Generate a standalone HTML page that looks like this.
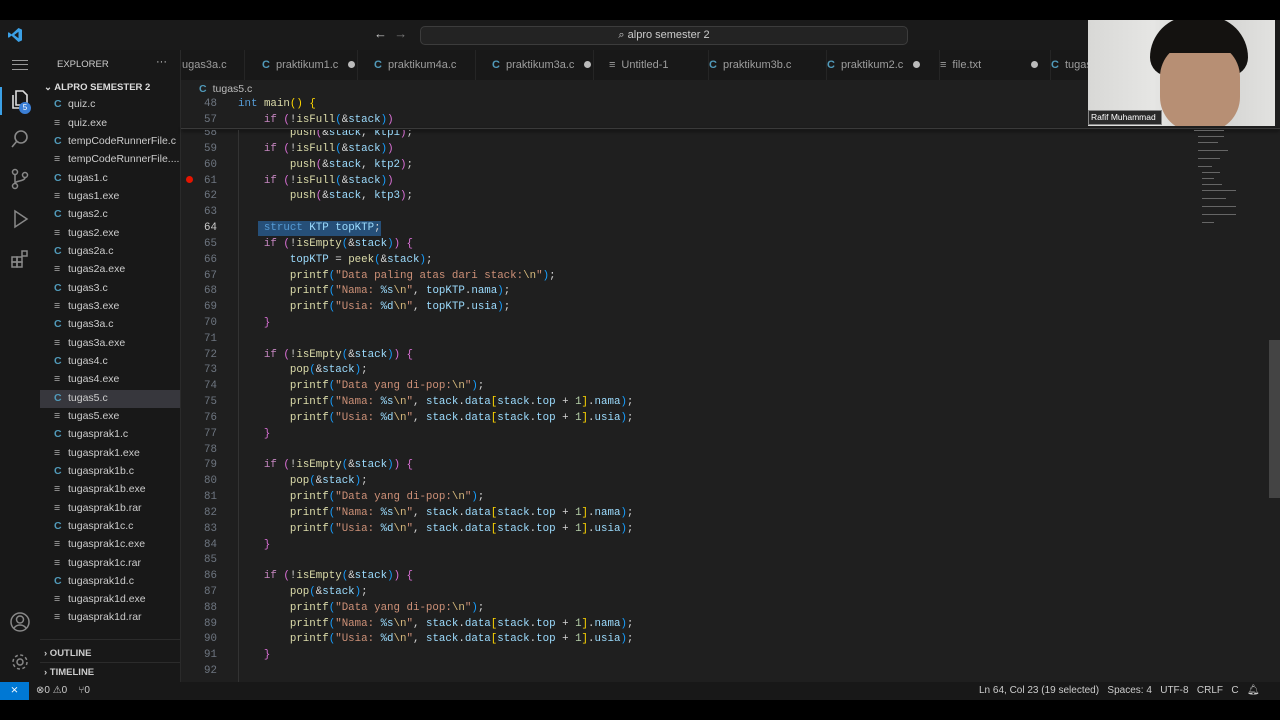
<!DOCTYPE html>
<html><head><meta charset="utf-8"><style>
*{margin:0;padding:0;box-sizing:border-box}
body{width:1280px;height:720px;background:#000;position:relative;overflow:hidden;font-family:"Liberation Sans",sans-serif;color:#ccc}
.abs{position:absolute}
#title{left:0;top:20px;width:1280px;height:30px;background:#1a1a1a}
#act{left:0;top:50px;width:40px;height:632px;background:#181818}
#side{left:40px;top:50px;width:141px;height:632px;background:#181818;border-right:1px solid #2a2a2a}
#ed{left:181px;top:80px;width:1099px;height:602px;background:#1f1f1f}
#tabs{left:181px;top:50px;width:1099px;height:30px;background:#181818}
.tab{position:absolute;top:0;height:30px;font-size:11px;color:#9d9d9d;line-height:30px;border-right:1px solid #252525;white-space:nowrap}
.ci{color:#519aba;font-weight:bold;margin-right:6px}
.dot{display:inline-block;width:7px;height:7px;border-radius:50%;background:#bbb;margin-left:10px}
.fi{position:absolute;left:54px;font-size:10.5px;color:#ccc;white-space:nowrap}
.fi b{display:inline-block;width:14px;color:#519aba;font-weight:bold}
.fi i{display:inline-block;width:14px;font-style:normal;color:#aaa}
.ln{position:absolute;left:181px;width:36px;text-align:right;font-family:"Liberation Mono",monospace;font-size:10.8px;color:#6e7681}
.cl{position:absolute;left:238px;font-family:"Liberation Mono",monospace;font-size:10.8px;color:#d4d4d4;white-space:pre}
.k{color:#569cd6}.c{color:#c586c0}.f{color:#dcdcaa}.v{color:#9cdcfe}.s{color:#ce9178}.n{color:#b5cea8}.b1{color:#ffd700}.b2{color:#da70d6}.b3{color:#179fff}.e{color:#d7ba7d}
#status{left:0;top:682px;width:1280px;height:18px;background:#181818;font-size:10px;color:#ccc;line-height:18px}
.mm{position:absolute;height:1px;background:#666}
</style></head><body>
<div id="title" class="abs">
 <svg class="abs" style="left:7px;top:7px" width="16" height="16" viewBox="0 0 16 16"><path d="M11.5 1 L15 2.6 V13.4 L11.5 15 L4.5 8.6 L1.8 10.7 L1 10.2 V5.8 L1.8 5.3 L4.5 7.4 L11.5 1 Z M11.5 4.8 L7.2 8 L11.5 11.2 Z" fill="#3ba0e6"/></svg>
 <div class="abs" style="left:374px;top:6px;font-size:13px;color:#ccc">←&nbsp;&nbsp;<span style="color:#777">→</span></div>
 <div class="abs" style="left:420px;top:6px;width:488px;height:19px;border:1px solid #3c3c3c;border-radius:5px;background:#232323;font-size:11px;text-align:center;line-height:17px;color:#ccc">⌕ alpro semester 2</div>
</div>
<div id="act" class="abs">
 <div class="abs" style="left:12px;top:10px;width:16px;height:10px;border-top:1.5px solid #999;border-bottom:1.5px solid #999"></div><div class="abs" style="left:12px;top:14px;width:16px;border-top:1.5px solid #999"></div>
 <div class="abs" style="left:0;top:37px;width:2px;height:28px;background:#3ba0e6"></div>
 <svg class="abs" style="left:9px;top:38px" width="24" height="24" viewBox="0 0 24 24" fill="none" stroke="#ddd" stroke-width="1.6"><path d="M7 3h7l4 4v10H7z M4 7v13h10"/></svg>
 <div class="abs" style="left:19px;top:52px;width:12px;height:12px;border-radius:50%;background:#3b7fd6;font-size:8px;color:#fff;text-align:center;line-height:12px">5</div>
 <svg class="abs" style="left:9px;top:78px" width="22" height="22" viewBox="0 0 22 22" fill="none" stroke="#888" stroke-width="1.6"><circle cx="12" cy="9" r="6"/><path d="M8 13 L3 19"/></svg>
 <svg class="abs" style="left:9px;top:118px" width="22" height="22" viewBox="0 0 22 22" fill="none" stroke="#888" stroke-width="1.5"><circle cx="6" cy="4" r="2.5"/><circle cx="6" cy="18" r="2.5"/><circle cx="16" cy="7" r="2.5"/><path d="M6 6.5v9 M16 9.5c0 4-10 3-10 6"/></svg>
 <svg class="abs" style="left:9px;top:158px" width="22" height="22" viewBox="0 0 22 22" fill="none" stroke="#888" stroke-width="1.5"><path d="M6 3 L18 11 L6 19 Z"/></svg>
 <svg class="abs" style="left:9px;top:198px" width="22" height="22" viewBox="0 0 22 22" fill="none" stroke="#888" stroke-width="1.5"><rect x="3" y="9" width="5" height="5"/><rect x="8" y="9" width="5" height="5"/><rect x="3" y="14" width="5" height="5"/><rect x="8" y="14" width="5" height="5"/><rect x="13" y="3" width="5" height="5"/></svg>
 <svg class="abs" style="left:9px;top:561px" width="22" height="22" viewBox="0 0 22 22" fill="none" stroke="#888" stroke-width="1.5"><circle cx="11" cy="11" r="9"/><circle cx="11" cy="8.5" r="3.5"/><path d="M5 17c3-4 9-4 12 0"/></svg>
 <svg class="abs" style="left:9px;top:601px" width="22" height="22" viewBox="0 0 22 22" fill="none" stroke="#888" stroke-width="1.5"><circle cx="11" cy="11" r="3"/><circle cx="11" cy="11" r="7" stroke-dasharray="3 2.5"/></svg>
</div>
<div id="side" class="abs">
 <div class="abs" style="left:17px;top:9px;font-size:9.5px;color:#ccc">EXPLORER</div>
 <div class="abs" style="left:116px;top:6px;font-size:11px;color:#ccc">···</div>
 <div class="abs" style="left:4px;top:32px;font-size:9.5px;font-weight:bold;color:#ddd">⌄ ALPRO SEMESTER 2</div>
 <div class="abs" style="left:0;top:340px;width:140px;height:18px;background:#37373d"></div>
 <div class="abs" style="left:0;top:589px;width:140px;border-top:1px solid #2b2b2b"></div>
 <div class="abs" style="left:4px;top:598px;font-size:9.5px;font-weight:bold;color:#ccc">› OUTLINE</div>
 <div class="abs" style="left:0;top:612px;width:140px;border-top:1px solid #2b2b2b"></div>
 <div class="abs" style="left:4px;top:617px;font-size:9.5px;font-weight:bold;color:#ccc">› TIMELINE</div>
</div>
<div class="abs" style="left:0;top:0;width:0;height:0">
<div class="fi" style="top:98px"><b>C</b>quiz.c</div>
<div class="fi" style="top:117px"><i>≡</i>quiz.exe</div>
<div class="fi" style="top:135px"><b>C</b>tempCodeRunnerFile.c</div>
<div class="fi" style="top:153px"><i>≡</i>tempCodeRunnerFile....</div>
<div class="fi" style="top:172px"><b>C</b>tugas1.c</div>
<div class="fi" style="top:190px"><i>≡</i>tugas1.exe</div>
<div class="fi" style="top:208px"><b>C</b>tugas2.c</div>
<div class="fi" style="top:227px"><i>≡</i>tugas2.exe</div>
<div class="fi" style="top:245px"><b>C</b>tugas2a.c</div>
<div class="fi" style="top:263px"><i>≡</i>tugas2a.exe</div>
<div class="fi" style="top:282px"><b>C</b>tugas3.c</div>
<div class="fi" style="top:300px"><i>≡</i>tugas3.exe</div>
<div class="fi" style="top:318px"><b>C</b>tugas3a.c</div>
<div class="fi" style="top:337px"><i>≡</i>tugas3a.exe</div>
<div class="fi" style="top:355px"><b>C</b>tugas4.c</div>
<div class="fi" style="top:373px"><i>≡</i>tugas4.exe</div>
<div class="fi" style="top:392px"><b>C</b>tugas5.c</div>
<div class="fi" style="top:410px"><i>≡</i>tugas5.exe</div>
<div class="fi" style="top:428px"><b>C</b>tugasprak1.c</div>
<div class="fi" style="top:447px"><i>≡</i>tugasprak1.exe</div>
<div class="fi" style="top:465px"><b>C</b>tugasprak1b.c</div>
<div class="fi" style="top:483px"><i>≡</i>tugasprak1b.exe</div>
<div class="fi" style="top:502px"><i>≡</i>tugasprak1b.rar</div>
<div class="fi" style="top:520px"><b>C</b>tugasprak1c.c</div>
<div class="fi" style="top:538px"><i>≡</i>tugasprak1c.exe</div>
<div class="fi" style="top:557px"><i>≡</i>tugasprak1c.rar</div>
<div class="fi" style="top:575px"><b>C</b>tugasprak1d.c</div>
<div class="fi" style="top:593px"><i>≡</i>tugasprak1d.exe</div>
<div class="fi" style="top:611px"><i>≡</i>tugasprak1d.rar</div>
</div>
<div id="tabs" class="abs">
 <div class="tab" style="left:0;width:64px;padding-left:1px">ugas3a.c</div>
 <div class="tab" style="left:64px;width:113px;padding-left:17px"><span class="ci">C</span>praktikum1.c<span class="dot"></span></div>
 <div class="tab" style="left:177px;width:118px;padding-left:16px"><span class="ci">C</span>praktikum4a.c</div>
 <div class="tab" style="left:295px;width:118px;padding-left:16px"><span class="ci">C</span>praktikum3a.c<span class="dot"></span></div>
 <div class="tab" style="left:413px;width:115px;padding-left:15px"><span style="margin-right:6px">≡</span>Untitled-1</div>
 <div class="tab" style="left:528px;width:118px;padding-left:0"><span class="ci">C</span>praktikum3b.c</div>
 <div class="tab" style="left:646px;width:113px;padding-left:0"><span class="ci">C</span>praktikum2.c<span class="dot"></span></div>
 <div class="tab" style="left:759px;width:111px;padding-left:0"><span style="margin-right:6px">≡</span>file.txt<span class="dot" style="margin-left:50px"></span></div>
 <div class="tab" style="left:870px;width:40px;padding-left:0;border:none"><span class="ci">C</span>tugas4.</div>
</div>
<div id="ed" class="abs">
 <div class="abs" style="left:18px;top:3px;font-size:10.5px;color:#bbb"><span class="ci">C</span>tugas5.c</div>
 <div class="abs" style="left:77px;top:141px;width:123px;height:15px;background:#264f78"></div>
 <div class="abs" style="left:0;top:48px;width:1099px;border-top:1px solid #3a3a3a;box-shadow:0 2px 3px #000"></div>
 <div class="abs" style="left:1088px;top:260px;width:11px;height:158px;background:#444"></div>
 <div class="abs" style="left:5px;top:96px;width:7px;height:7px;border-radius:50%;background:#e51400"></div>
 <div class="abs" style="left:57px;top:50px;width:1px;height:552px;background:#333"></div>
 <div class="abs" style="left:1013px;top:46px;width:45px;height:110px">
  <div class="mm" style="left:0;top:4px;width:30px"></div><div class="mm" style="left:4px;top:10px;width:26px"></div><div class="mm" style="left:4px;top:16px;width:20px"></div><div class="mm" style="left:4px;top:24px;width:30px"></div><div class="mm" style="left:4px;top:32px;width:22px"></div><div class="mm" style="left:4px;top:40px;width:14px"></div><div class="mm" style="left:8px;top:46px;width:18px"></div><div class="mm" style="left:8px;top:52px;width:12px"></div><div class="mm" style="left:8px;top:58px;width:20px"></div><div class="mm" style="left:8px;top:64px;width:34px"></div><div class="mm" style="left:8px;top:72px;width:24px"></div><div class="mm" style="left:8px;top:80px;width:34px"></div><div class="mm" style="left:8px;top:88px;width:34px"></div><div class="mm" style="left:8px;top:96px;width:12px"></div>
 </div>
</div>
<div class="ln" style="top:98px">48</div><div class="cl" style="top:98px"><span class="k">int</span> <span class="f">main</span><span class="b1">()</span> <span class="b1">{</span></div>
<div class="ln" style="top:114px">57</div><div class="cl" style="top:114px">    <span class="c">if</span> <span class="b2">(</span>!<span class="f">isFull</span><span class="b3">(</span>&amp;<span class="v">stack</span><span class="b3">)</span><span class="b2">)</span></div>
<div class="ln" style="top:127px;clip-path:inset(3px 0 0 0)">58</div><div class="cl" style="top:127px;clip-path:inset(3px 0 0 0)">        <span class="f">push</span><span class="b2">(</span>&amp;<span class="v">stack</span>, <span class="v">ktp1</span><span class="b2">)</span>;</div>
<div id="code"></div>
<div class="abs" style="left:1088px;top:20px;width:187px;height:106px;background:linear-gradient(90deg,#d8d8d6 0%,#e6e6e4 35%,#cfcfcd 60%,#e2e2e0 100%);overflow:hidden">
 <div class="abs" style="left:62px;top:-4px;width:98px;height:60px;border-radius:45px 45px 20px 20px;background:#141210"></div>
 <div class="abs" style="left:72px;top:22px;width:80px;height:90px;border-radius:35px;background:#b78f74"></div>
 <div class="abs" style="left:70px;top:8px;width:84px;height:25px;border-radius:30px 30px 5px 5px;background:#141210"></div>
 <div class="abs" style="left:0;top:90px;width:74px;height:15px;background:#2a2a2a;border:1px solid #888;font-size:8.5px;color:#fff;line-height:13px;padding-left:2px;white-space:nowrap">Rafif Muhammad</div>
</div>
<div id="status" class="abs">
 <div class="abs" style="left:0;top:0;width:29px;height:18px;background:#0078d4;color:#fff;text-align:center">⨯</div>
 <div class="abs" style="left:36px">⊗0 ⚠0&nbsp;&nbsp;&nbsp; ⑂0</div>
 <div class="abs" style="left:979px;white-space:nowrap">Ln 64, Col 23 (19 selected)&nbsp;&nbsp;&nbsp;Spaces: 4&nbsp;&nbsp;&nbsp;UTF-8&nbsp;&nbsp;&nbsp;CRLF&nbsp;&nbsp;&nbsp;C&nbsp;&nbsp;&nbsp;🔔︎</div>
</div>
<script>
var L={
59:'    <span class="c">if</span> <span class="b2">(</span>!<span class="f">isFull</span><span class="b3">(</span>&amp;<span class="v">stack</span><span class="b3">)</span><span class="b2">)</span>',
60:'        <span class="f">push</span><span class="b2">(</span>&amp;<span class="v">stack</span>, <span class="v">ktp2</span><span class="b2">)</span>;',
61:'    <span class="c">if</span> <span class="b2">(</span>!<span class="f">isFull</span><span class="b3">(</span>&amp;<span class="v">stack</span><span class="b3">)</span><span class="b2">)</span>',
62:'        <span class="f">push</span><span class="b2">(</span>&amp;<span class="v">stack</span>, <span class="v">ktp3</span><span class="b2">)</span>;',
63:'',
64:'    <span class="k">struct</span> <span class="v">KTP</span> <span class="v">topKTP</span>;',
91:'    <span class="b2">}</span>',92:''};
function ifE(){return '    <span class="c">if</span> <span class="b2">(</span>!<span class="f">isEmpty</span><span class="b3">(</span>&amp;<span class="v">stack</span><span class="b3">)</span><span class="b2">)</span> <span class="b2">{</span>';}
function pr(t){return '        <span class="f">printf</span><span class="b3">(</span><span class="s">"'+t+'"</span><span class="b3">)</span>;';}
function pf(t,x){return '        <span class="f">printf</span><span class="b3">(</span><span class="s">"'+t+'"</span>, '+x+'<span class="b3">)</span>;';}
function sd(m){return '<span class="v">stack</span>.<span class="v">data</span><span class="b1">[</span><span class="v">stack</span>.<span class="v">top</span> + <span class="n">1</span><span class="b1">]</span>.<span class="v">'+m+'</span>';}
L[65]=ifE();L[66]='        <span class="v">topKTP</span> = <span class="f">peek</span><span class="b3">(</span>&amp;<span class="v">stack</span><span class="b3">)</span>;';
L[67]=pr('Data paling atas dari stack:<span class="e">\\n</span>');
L[68]=pf('Nama: <span class="v">%s</span><span class="e">\\n</span>','<span class="v">topKTP</span>.<span class="v">nama</span>');
L[69]=pf('Usia: <span class="v">%d</span><span class="e">\\n</span>','<span class="v">topKTP</span>.<span class="v">usia</span>');
L[70]='    <span class="b2">}</span>';L[71]='';
[72,79,86].forEach(function(s){L[s]=ifE();L[s+1]='        <span class="f">pop</span><span class="b3">(</span>&amp;<span class="v">stack</span><span class="b3">)</span>;';
L[s+2]=pr('Data yang di-pop:<span class="e">\\n</span>');
L[s+3]=pf('Nama: <span class="v">%s</span><span class="e">\\n</span>',sd('nama'));
L[s+4]=pf('Usia: <span class="v">%d</span><span class="e">\\n</span>',sd('usia'));
if(s<86){L[s+5]='    <span class="b2">}</span>';L[s+6]='';}});
var h='';for(var n=59;n<=92;n++){var y=143+(n-59)*15.82;
h+='<div class="ln" style="top:'+y+'px;'+(n==64?'color:#ccc':'')+'">'+n+'</div><div class="cl" style="top:'+y+'px">'+L[n]+'</div>';}
document.getElementById('code').innerHTML=h;
</script>
</body></html>
